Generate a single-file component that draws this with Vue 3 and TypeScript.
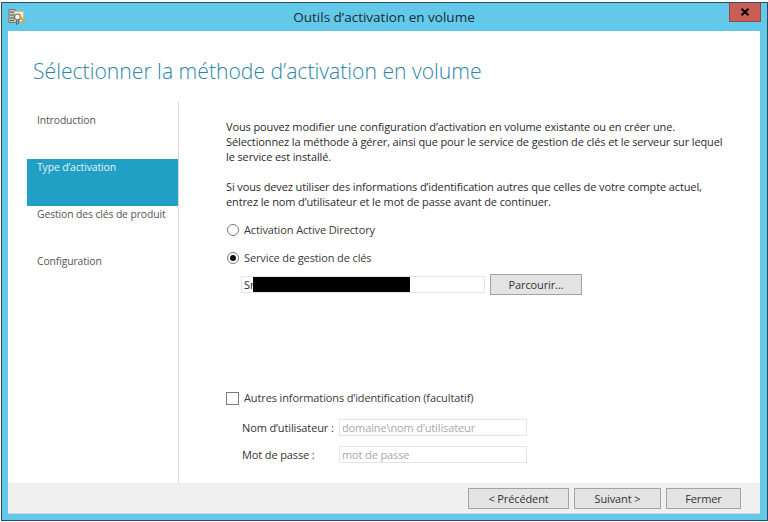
<script setup lang="ts">
const steps = [
  { label: 'Introduction', active: false },
  { label: 'Type d’activation', active: true },
  { label: 'Gestion des clés de produit', active: false },
  { label: 'Configuration', active: false },
]
</script>

<template>
  <div class="page">
    <div class="window">
      <header class="titlebar">
        <svg class="app-icon" width="18" height="18" viewBox="0 0 18 18">
          <rect x="1" y="1.500" width="6" height="13" fill="#c9c9bf" stroke="#77776f" stroke-width="1" />
          <path d="M2 4h4M2 7h4M2 10h4M2 12.500h4" stroke="#55554f" stroke-width="1" />
          <rect x="6.500" y="3.500" width="9" height="10" fill="#fbf1d6" stroke="#d8b884" stroke-width="1" />
          <circle cx="9.500" cy="9" r="3" fill="#eef4f6" stroke="#5f6b70" stroke-width="1.200" />
          <path d="M8.500 12v5M10.500 12v4" stroke="#5f6b70" stroke-width="1.200" />
          <path d="M11.500 7l5 8" stroke="#e0a03c" stroke-width="2" />
        </svg>
        <span class="title">Outils d’activation en volume</span>
        <button class="close" type="button" aria-label="Fermer">
          <svg width="10" height="8" viewBox="0 0 10 8">
            <path d="M1.500 .8l7 6.400M8.500 .8l-7 6.400" stroke="#000" stroke-width="2" fill="none" />
          </svg>
        </button>
      </header>

      <div class="client">
        <h1 class="heading">Sélectionner la méthode d’activation en volume</h1>
        <div class="body">
          <nav class="steps">
            <div v-for="step in steps" :key="step.label" class="step" :class="{ active: step.active }">
              {{ step.label }}
            </div>
          </nav>

          <main class="content">
            <p class="para">
              Vous pouvez modifier une configuration d’activation en volume existante ou en créer une.<br />
              Sélectionnez la méthode à gérer, ainsi que pour le service de gestion de clés et le serveur sur lequel<br />
              le service est installé.
            </p>
            <p class="para second">
              Si vous devez utiliser des informations d’identification autres que celles de votre compte actuel,<br />
              entrez le nom d’utilisateur et le mot de passe avant de continuer.
            </p>

            <label class="option first-option">
              <span class="radio"></span>
              <span>Activation Active Directory</span>
            </label>
            <label class="option second-option">
              <span class="radio checked"></span>
              <span>Service de gestion de clés</span>
            </label>

            <div class="server-row">
              <div class="server-input">
                <span>Sr</span>
                <span class="redaction"></span>
              </div>
              <button class="btn browse" type="button">Parcourir...</button>
            </div>

            <label class="option cred-option">
              <span class="checkbox"></span>
              <span>Autres informations d’identification (facultatif)</span>
            </label>

            <div class="cred-grid">
              <span class="cred-label">Nom d’utilisateur :</span>
              <div class="cred-input">domaine\nom d’utilisateur</div>
              <span class="cred-label">Mot de passe :</span>
              <div class="cred-input">mot de passe</div>
            </div>
          </main>
        </div>

        <footer class="footer">
          <button class="btn prev" type="button">&lt; Précédent</button>
          <button class="btn next" type="button">Suivant &gt;</button>
          <button class="btn quit" type="button">Fermer</button>
        </footer>
      </div>
    </div>
  </div>
</template>

<style>
html,
body {
  margin: 0;
  background: #fff;
}
</style>

<style scoped>
.page {
  width: 768px;
  height: 522px;
  box-sizing: border-box;
  padding: 2px 0 1px 1px;
  font-family: "Open Sans", "Noto Sans", sans-serif;
  font-size: 11px;
  letter-spacing: -0.12px;
  color: #2b2b2b;
  overflow: hidden;
}
.window {
  height: 100%;
  box-sizing: border-box;
  border: 1px solid #2f4a58;
  background: #63c9ea;
  padding: 0 7px 6px 6px;
  display: flex;
  flex-direction: column;
}
.titlebar {
  height: 28px;
  flex: none;
  display: flex;
  align-items: center;
  justify-content: center;
  position: relative;
}
.app-icon {
  position: absolute;
  left: 0;
  top: 5px;
}
.title {
  font-size: 13.500px;
  letter-spacing: 0;
  color: #1d2a30;
}
.close {
  position: absolute;
  top: 0;
  right: -1px;
  width: 32px;
  height: 19px;
  padding: 0;
  border: 1px solid #8f4b47;
  border-top: 0;
  background: #c75f56;
  display: flex;
  align-items: center;
  justify-content: center;
}
.client {
  flex: 1;
  min-height: 0;
  background: #fff;
  display: flex;
  flex-direction: column;
}
.heading {
  margin: 0;
  height: 71px;
  box-sizing: border-box;
  padding: 24px 0 0 25px;
  font-size: 21.150px;
  line-height: 32px;
  letter-spacing: 0;
  font-weight: 300;
  color: #2d86a8;
}
.body {
  flex: 1;
  min-height: 0;
  display: flex;
}
.steps {
  width: 171px;
  box-sizing: border-box;
  padding: 10px 0 0 19px;
  border-right: 1px solid #dcdcdc;
  flex: none;
}
.step {
  height: 47px;
  box-sizing: border-box;
  padding: 0 0 0 10px;
  font-size: 10.400px;
  line-height: 16px;
  color: #555;
  white-space: nowrap;
}
.step.active {
  background: #20a0c4;
  color: #e4f2f6;
}
.content {
  flex: 1;
  padding: 17px 0 0 47px;
}
.para {
  margin: 0;
  line-height: 15px;
  white-space: nowrap;
}
.para.second {
  margin-top: 15px;
}
.option {
  display: flex;
  align-items: center;
  gap: 5px;
  line-height: 16px;
  color: #3a3a3a;
}
.first-option {
  margin-top: 13px;
}
.second-option {
  margin-top: 12px;
}
.cred-option {
  margin-top: 95px;
}
.radio {
  width: 10px;
  height: 10px;
  flex: none;
  border: 1px solid #7a7a7a;
  border-radius: 50%;
  background: #fff;
  position: relative;
  margin-left: 1px;
}
.radio.checked::after {
  content: "";
  position: absolute;
  left: 2px;
  top: 2px;
  width: 6px;
  height: 6px;
  border-radius: 50%;
  background: #111;
}
.checkbox {
  width: 11px;
  height: 11px;
  flex: none;
  border: 1px solid #7a7a7a;
  background: #fff;
}
.server-row {
  display: flex;
  align-items: center;
  gap: 5px;
  margin: 8px 0 0 15px;
}
.server-input {
  position: relative;
  width: 244px;
  height: 17px;
  box-sizing: border-box;
  border: 1px solid #e4e4ea;
  padding-left: 2px;
  line-height: 15px;
}
.redaction {
  position: absolute;
  left: 11px;
  top: 0;
  width: 157px;
  height: 15px;
  background: #000;
}
.btn {
  box-sizing: border-box;
  height: 21px;
  padding: 0;
  border: 1px solid #a3a3a3;
  background: #e3e3e3;
  font-family: inherit;
  font-size: 11px;
  letter-spacing: -0.12px;
  color: #333;
}
.browse {
  width: 92px;
}
.cred-grid {
  display: grid;
  grid-template-columns: 97px 188px;
  grid-auto-rows: 17px;
  row-gap: 10px;
  align-items: center;
  margin: 13px 0 0 16px;
}
.cred-label {
  line-height: 19px;
  white-space: nowrap;
  color: #333;
}
.cred-input {
  height: 17px;
  box-sizing: border-box;
  border: 1px solid #e4e4e4;
  padding-left: 2px;
  line-height: 15px;
  color: #a8a8a8;
}
.footer {
  height: 31px;
  flex: none;
  box-sizing: border-box;
  background: #f0f0f0;
  display: flex;
  justify-content: flex-end;
  align-items: flex-start;
  gap: 5px;
  padding: 5px 19px 0 0;
  border-bottom: 1px solid #d0dde2;
}
.prev {
  width: 101px;
}
.next {
  width: 87px;
}
.quit {
  width: 75px;
}
</style>
